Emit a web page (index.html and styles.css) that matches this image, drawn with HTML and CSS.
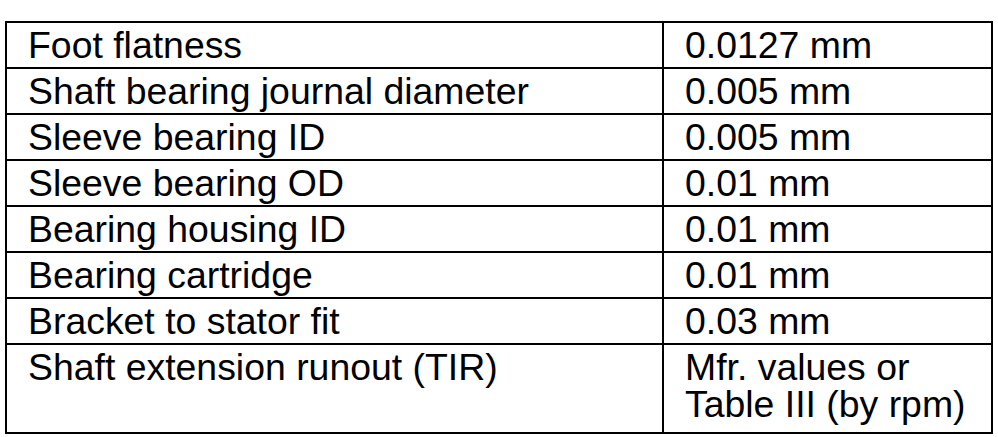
FILE: index.html
```html
<!DOCTYPE html>
<html>
<head>
<meta charset="utf-8">
<link rel="stylesheet" href="styles.css">
</head>
<body>
<table class="spec">
  <tr><td class="name">Foot flatness</td><td class="val">0.0127 mm</td></tr>
  <tr><td class="name">Shaft bearing journal diameter</td><td class="val">0.005 mm</td></tr>
  <tr><td class="name">Sleeve bearing ID</td><td class="val">0.005 mm</td></tr>
  <tr><td class="name">Sleeve bearing OD</td><td class="val">0.01 mm</td></tr>
  <tr><td class="name">Bearing housing ID</td><td class="val">0.01 mm</td></tr>
  <tr><td class="name">Bearing cartridge</td><td class="val">0.01 mm</td></tr>
  <tr><td class="name">Bracket to stator fit</td><td class="val">0.03 mm</td></tr>
  <tr class="tall"><td class="name">Shaft extension runout (TIR)</td><td class="val">Mfr. values or<br>Table III (by rpm)</td></tr>
</table>
</body>
</html>
```

FILE: styles.css
```css
html, body {
  margin: 0;
  padding: 0;
  background: #ffffff;
}
body {
  padding: 21px 0 0 5px;
  font-family: "Liberation Sans", Arial, sans-serif;
  color: #000;
}
.spec {
  border-collapse: collapse;
  width: 988px;
  font-size: 37.4px;
  line-height: 37px;
}
.spec tr {
  height: 46px;
}
.spec tr.tall {
  height: 89px;
}
.spec td {
  border: 2px solid #000;
  padding: 4px 0 0 21px;
  vertical-align: top;
  white-space: nowrap;
}
.spec td.name {
  width: 634px;
}
.spec td.val {
  padding-left: 21px;
}
```
